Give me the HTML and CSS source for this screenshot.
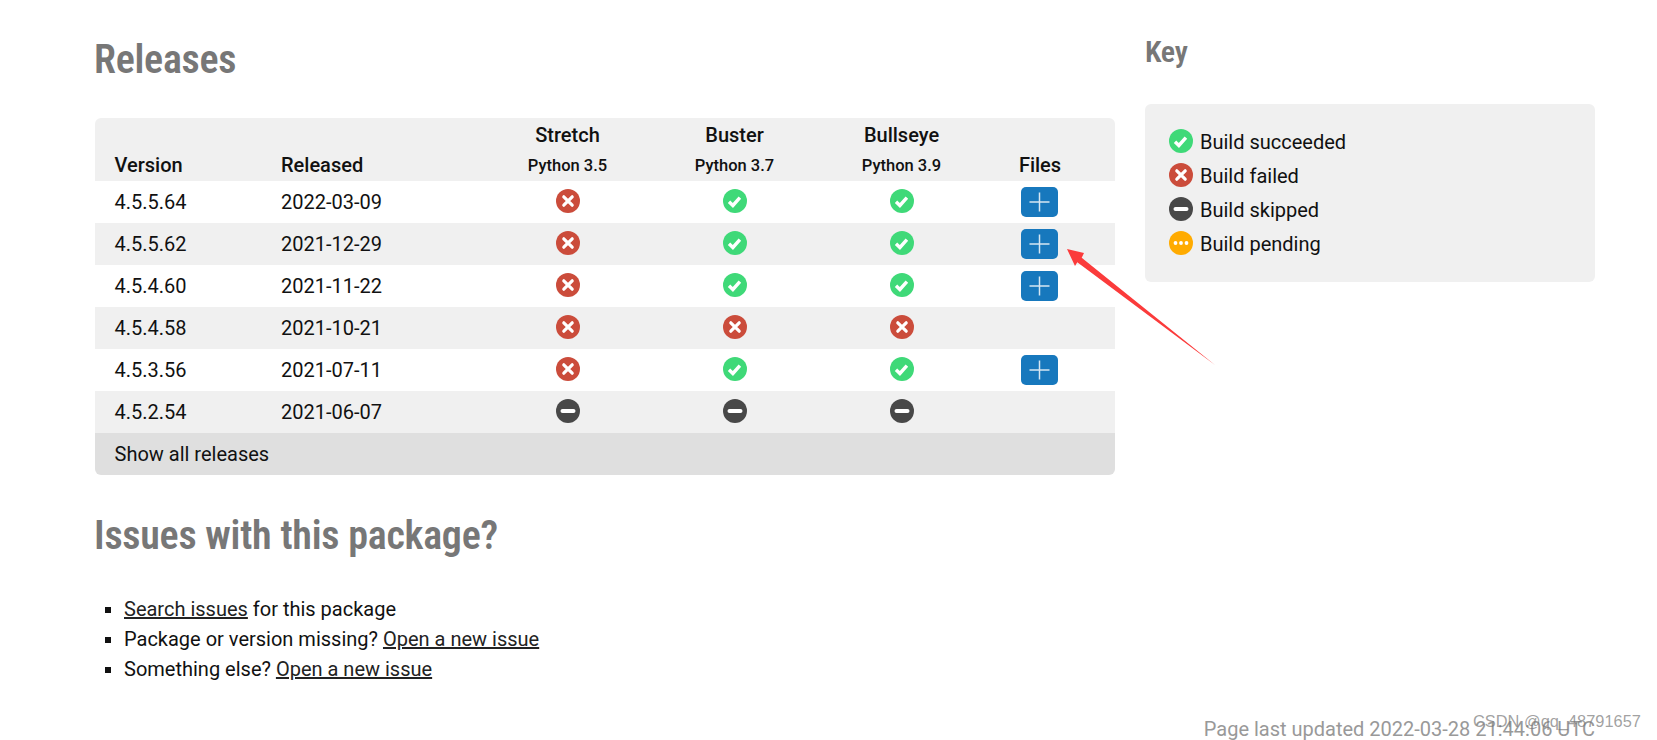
FILE: index.html
```html
<!DOCTYPE html>
<html lang="en">
<head>
<meta charset="utf-8">
<title>Releases</title>
<link rel="stylesheet" href="styles.css">
</head>
<body>
<svg class="defs" width="0" height="0" aria-hidden="true">
  <symbol id="ok" viewBox="0 0 24 24"><circle cx="12" cy="12" r="12" fill="#3fd978"/><path d="M6 12.700l3.900 3.800 7-7.900" fill="none" stroke="#fff" stroke-width="3.400"/></symbol>
  <symbol id="fail" viewBox="0 0 24 24"><circle cx="12" cy="12" r="12" fill="#cb4c3b"/><path d="M7.800 7.800l8.400 8.400M16.200 7.800l-8.400 8.400" fill="none" stroke="#fff" stroke-width="3.200" stroke-linecap="round"/></symbol>
  <symbol id="skip" viewBox="0 0 24 24"><circle cx="12" cy="12" r="12" fill="#484848"/><rect x="4.500" y="10" width="15" height="4" rx="2" fill="#fff"/></symbol>
  <symbol id="pending" viewBox="0 0 24 24"><circle cx="12" cy="12" r="12" fill="#ffab00"/><circle cx="6.500" cy="12" r="1.900" fill="#fff"/><circle cx="12" cy="12" r="1.900" fill="#fff"/><circle cx="17.500" cy="12" r="1.900" fill="#fff"/></symbol>
  <symbol id="plus" viewBox="0 0 37 30"><path d="M8.500 15h20M18.500 5.500v19" fill="none" stroke="#d6e6f2" stroke-width="1.500"/></symbol>
</svg>
<div class="page">
  <main class="main">
    <h2 class="title">Releases</h2>
    <table class="releases">
      <thead>
        <tr class="head-top"><th></th><th></th><th class="c">Stretch</th><th class="c">Buster</th><th class="c">Bullseye</th><th></th></tr>
        <tr class="head-sub"><th>Version</th><th>Released</th><th class="c py">Python 3.5</th><th class="c py">Python 3.7</th><th class="c py">Python 3.9</th><th class="c last">Files</th></tr>
      </thead>
      <tbody>
        <tr><td>4.5.5.64</td><td>2022-03-09</td><td class="c"><svg class="ic"><use href="#fail"/></svg></td><td class="c"><svg class="ic"><use href="#ok"/></svg></td><td class="c"><svg class="ic"><use href="#ok"/></svg></td><td class="c last"><button class="btn"><svg class="plus"><use href="#plus"/></svg></button></td></tr>
        <tr><td>4.5.5.62</td><td>2021-12-29</td><td class="c"><svg class="ic"><use href="#fail"/></svg></td><td class="c"><svg class="ic"><use href="#ok"/></svg></td><td class="c"><svg class="ic"><use href="#ok"/></svg></td><td class="c last"><button class="btn"><svg class="plus"><use href="#plus"/></svg></button></td></tr>
        <tr><td>4.5.4.60</td><td>2021-11-22</td><td class="c"><svg class="ic"><use href="#fail"/></svg></td><td class="c"><svg class="ic"><use href="#ok"/></svg></td><td class="c"><svg class="ic"><use href="#ok"/></svg></td><td class="c last"><button class="btn"><svg class="plus"><use href="#plus"/></svg></button></td></tr>
        <tr><td>4.5.4.58</td><td>2021-10-21</td><td class="c"><svg class="ic"><use href="#fail"/></svg></td><td class="c"><svg class="ic"><use href="#fail"/></svg></td><td class="c"><svg class="ic"><use href="#fail"/></svg></td><td class="c last"></td></tr>
        <tr><td>4.5.3.56</td><td>2021-07-11</td><td class="c"><svg class="ic"><use href="#fail"/></svg></td><td class="c"><svg class="ic"><use href="#ok"/></svg></td><td class="c"><svg class="ic"><use href="#ok"/></svg></td><td class="c last"><button class="btn"><svg class="plus"><use href="#plus"/></svg></button></td></tr>
        <tr><td>4.5.2.54</td><td>2021-06-07</td><td class="c"><svg class="ic"><use href="#skip"/></svg></td><td class="c"><svg class="ic"><use href="#skip"/></svg></td><td class="c"><svg class="ic"><use href="#skip"/></svg></td><td class="c last"></td></tr>
      </tbody>
      <tfoot>
        <tr><td colspan="6">Show all releases</td></tr>
      </tfoot>
    </table>
    <h2 class="title issues">Issues with this package?</h2>
    <ul class="links">
      <li><a href="#">Search issues</a> for this package</li>
      <li>Package or version missing? <a href="#">Open a new issue</a></li>
      <li>Something else? <a href="#">Open a new issue</a></li>
    </ul>
  </main>
  <aside class="side">
    <h3 class="key-title">Key</h3>
    <ul class="key">
      <li><svg class="ic"><use href="#ok"/></svg>Build succeeded</li>
      <li><svg class="ic"><use href="#fail"/></svg>Build failed</li>
      <li><svg class="ic"><use href="#skip"/></svg>Build skipped</li>
      <li><svg class="ic"><use href="#pending"/></svg>Build pending</li>
    </ul>
  </aside>
</div>
<footer class="foot">Page last updated 2022-03-28 21:44:06 UTC</footer>
<svg class="arrow" width="170" height="130" viewBox="0 0 170 130" aria-hidden="true"><polygon points="7,4 24,8 21.700,12.700 155,120 17.300,17.300 15,21" fill="#fb3b3b"/></svg>
<div class="mark">CSDN @qq_48791657</div>
</body>
</html>
```
FILE: styles.css
```css
html, body { margin: 0; padding: 0; background: #fff; }
body {
  position: relative;
  height: 740px;
  overflow: hidden;
  font-family: Roboto, "Liberation Sans", sans-serif;
  font-size: 20px;
  line-height: 30px;
  color: #111;
}
.defs { position: absolute; }
.page {
  display: flex;
  gap: 30px;
  padding: 0 62px 0 95px;
}
.main { width: 1020px; flex: none; }
.side { width: 450px; flex: none; }
.title {
  margin: 36px 0 34px -1px;
  font-size: 40px;
  line-height: 48px;
  font-weight: 600;
  font-stretch: 75%;
  letter-spacing: -.25px;
  color: #777;
}
.issues { margin: 37px 0 34px -1px; }
.releases {
  width: 1020px;
  border-collapse: separate;
  border-spacing: 0;
  table-layout: fixed;
  border-radius: 6px;
  overflow: hidden;
}
.releases th, .releases td { box-sizing: border-box; }
.releases th:nth-child(1) { width: 166px; }
.releases th:nth-child(2) { width: 223px; }
.releases th:nth-child(3), .releases th:nth-child(4), .releases th:nth-child(5) { width: 167px; }
.releases thead { background: #f0f0f0; }
.releases th { text-align: left; padding: 0 0 0 20px; font-weight: 500; }
.releases th.c, .releases td.c { text-align: center; padding: 0; }
.releases td.last { padding-right: 21px; }
.head-top th { height: 33px; line-height: 32px; }
.head-sub th { height: 30px; line-height: 28px; vertical-align: bottom; padding-bottom: 2px; }
.releases th.last { padding: 0 20px 2px 0; }
.releases th.py { font-size: 16.500px; line-height: 30px; }
.releases td { height: 42px; padding: 0 0 0 20px; line-height: 42px; }
.releases tr > :first-child { padding-left: 19.500px; }
.releases tbody tr:nth-child(even) { background: #f0f0f0; }
.releases tfoot td { background: #dfdfdf; }
.ic { display: block; width: 24px; height: 24px; flex: none; margin-bottom: 2px; }
td > .ic { margin: 0 auto 2px; }
.btn {
  display: block;
  width: 37px;
  height: 30px;
  margin: 0 auto;
  padding: 0;
  border: 0;
  border-radius: 5px;
  background: #1778bd;
}
.plus { display: block; width: 37px; height: 30px; }
.links {
  margin: 0;
  padding: 0 0 0 29px;
  list-style: square;
}
.links a { color: #222; }
.key-title {
  margin: 34px 0 34px;
  font-size: 30px;
  line-height: 36px;
  font-weight: 600;
  font-stretch: 75%;
  letter-spacing: -.3px;
  color: #777;
}
.key {
  margin: 0;
  padding: 21px 24px;
  list-style: none;
  background: #f0f0f0;
  border-radius: 6px;
}
.key li { display: flex; align-items: center; gap: 7px; height: 34px; }
.foot {
  position: absolute;
  right: 62px;
  top: 714px;
  color: #999;
}
.arrow { position: absolute; left: 1060px; top: 245px; }
.mark {
  position: absolute;
  left: 1473px;
  top: 710px;
  font-size: 16.400px;
  line-height: 22px;
  white-space: nowrap;
  color: rgba(120, 120, 120, .7);
  font-family: "Liberation Sans", sans-serif;
}
```
